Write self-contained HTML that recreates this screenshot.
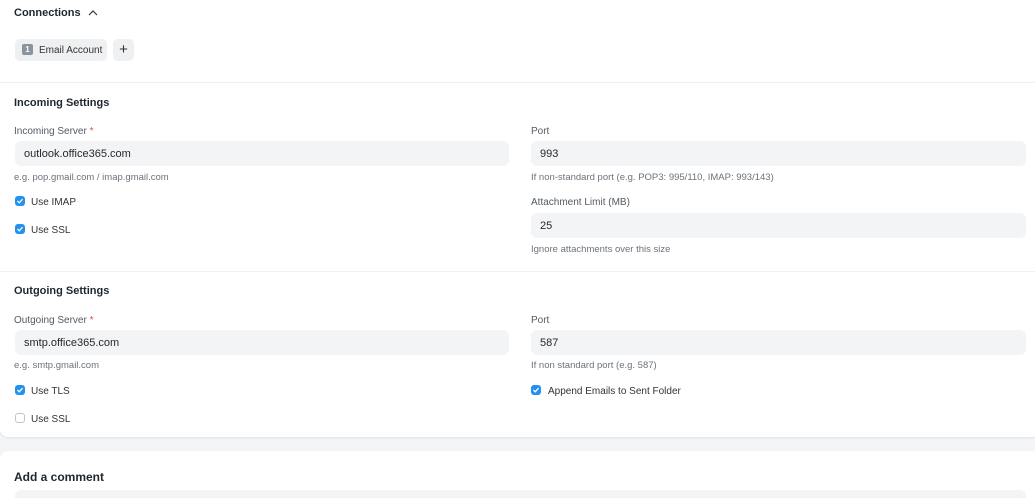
<!DOCTYPE html><html><head><style>
html,body{margin:0;width:1035px;height:498px;overflow:hidden}
body{background:#f4f5f6;font-family:"Liberation Sans",sans-serif;position:relative}
.card{position:absolute;left:0;width:1040px;background:#fff;border-radius:0 0 8px 8px;box-shadow:0 1px 2px rgba(0,0,0,.08)}
.a{position:absolute;white-space:nowrap}
.h{font-weight:bold;font-size:11px;color:#1f272e}
.l{font-size:10px;color:#525a63}
.hint{font-size:9.5px;color:#6b737b}
.inp{position:absolute;height:25px;background:#f3f4f5;border-radius:6px;font-size:11px;color:#1f272e;line-height:25px;padding-left:9px;box-sizing:border-box}
.cb{position:absolute;width:10px;height:10px;border-radius:3px;background:#2490ef}
.cb svg{position:absolute;left:1px;top:1px}
.cbo{background:#fff;border:1px solid #c0c6cc;box-sizing:border-box}
.hr{position:absolute;left:0;width:1040px;height:1px;background:#eef0f2}
</style></head><body>
<div class="card" style="top:0;height:437px"></div>
<div class="card" style="top:451px;height:60px;border-radius:8px"></div>
<div class="a h" style="left:14px;top:7px">Connections</div>
<svg class="a" style="left:88px;top:9px" width="10" height="8"><path d="M1 6 L5 2 L9 6" fill="none" stroke="#333" stroke-width="1.2"/></svg>
<div class="a" style="left:15px;top:39px;width:92px;height:22px;background:#eef0f2;border-radius:5px"></div>
<div class="a" style="left:22px;top:44px;width:11px;height:11px;background:#8b949c;border-radius:2px;color:#fff;font-size:8px;text-align:center;line-height:11px;font-weight:bold">1</div>
<div class="a" style="left:39px;top:45px;font-size:10px;color:#333">Email Account</div>
<div class="a" style="left:113px;top:39px;width:21px;height:22px;background:#eef0f2;border-radius:5px;text-align:center;line-height:21px;font-size:15px;color:#333">+</div>
<div class="hr" style="top:82px"></div>
<div class="a h" style="left:14px;top:97px">Incoming Settings</div>
<div class="a l" style="left:14px;top:126px">Incoming Server <span style="color:#e24c4c">*</span></div>
<div class="inp" style="left:15px;top:141px;width:494px;line-height:26px">outlook.office365.com</div>
<div class="a hint" style="left:14px;top:172px">e.g. pop.gmail.com / imap.gmail.com</div>
<div class="cb" style="left:15px;top:196px"><svg width="8" height="8"><path d="M1.5 4 L3.3 5.8 L6.5 2.2" fill="none" stroke="#fff" stroke-width="1.3"/></svg></div>
<div class="a l" style="left:31px;top:197px;color:#333">Use IMAP</div>
<div class="cb" style="left:15px;top:224px"><svg width="8" height="8"><path d="M1.5 4 L3.3 5.8 L6.5 2.2" fill="none" stroke="#fff" stroke-width="1.3"/></svg></div>
<div class="a l" style="left:31px;top:225px;color:#333">Use SSL</div>
<div class="a l" style="left:531px;top:126px">Port</div>
<div class="inp" style="left:531px;top:141px;width:495px;line-height:26px">993</div>
<div class="a hint" style="left:531px;top:172px">If non-standard port (e.g. POP3: 995/110, IMAP: 993/143)</div>
<div class="a l" style="left:531px;top:197px">Attachment Limit (MB)</div>
<div class="inp" style="left:531px;top:213px;width:495px;line-height:26px">25</div>
<div class="a hint" style="left:531px;top:244px">Ignore attachments over this size</div>
<div class="hr" style="top:271px"></div>
<div class="a h" style="left:14px;top:285px">Outgoing Settings</div>
<div class="a l" style="left:14px;top:315px">Outgoing Server <span style="color:#e24c4c">*</span></div>
<div class="inp" style="left:15px;top:330px;width:494px;line-height:26px">smtp.office365.com</div>
<div class="a hint" style="left:14px;top:360px">e.g. smtp.gmail.com</div>
<div class="cb" style="left:15px;top:385px"><svg width="8" height="8"><path d="M1.5 4 L3.3 5.8 L6.5 2.2" fill="none" stroke="#fff" stroke-width="1.3"/></svg></div>
<div class="a l" style="left:31px;top:386px;color:#333">Use TLS</div>
<div class="cb cbo" style="left:15px;top:413px"></div>
<div class="a l" style="left:31px;top:414px;color:#333">Use SSL</div>
<div class="a l" style="left:531px;top:315px">Port</div>
<div class="inp" style="left:531px;top:330px;width:495px;line-height:26px">587</div>
<div class="a hint" style="left:531px;top:360px">If non standard port (e.g. 587)</div>
<div class="cb" style="left:531px;top:385px"><svg width="8" height="8"><path d="M1.5 4 L3.3 5.8 L6.5 2.2" fill="none" stroke="#fff" stroke-width="1.3"/></svg></div>
<div class="a l" style="left:548px;top:386px;color:#333">Append Emails to Sent Folder</div>
<div class="a h" style="left:14px;top:470px;font-size:12px">Add a comment</div>
<div class="inp" style="left:15px;top:490px;width:1011px"></div>
</body></html>
